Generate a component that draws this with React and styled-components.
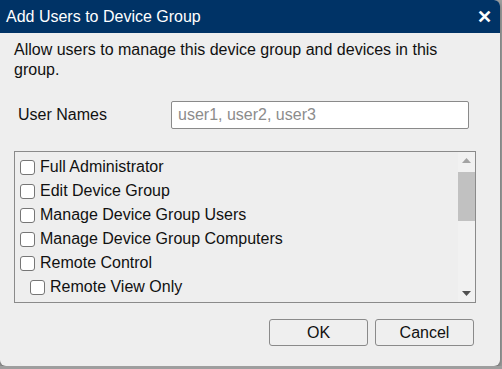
import React from "react";
import styled, { createGlobalStyle } from "styled-components";

const GlobalStyle = createGlobalStyle`
  body {
    margin: 0;
    background: #9e9e9e;
    font-family: Arial, "Liberation Sans", sans-serif;
  }
`;

const Dialog = styled.div`
  width: 500px;
  height: 366px;
  background: #eeeeee;
  border-radius: 0 6px 6px 6px;
  box-shadow: 0 2px 4px rgba(0, 0, 0, 0.35);
  overflow: hidden;
  display: flex;
  flex-direction: column;
  color: #111;
`;

const Header = styled.div`
  height: 33px;
  background: #003366;
  display: flex;
  align-items: center;
  justify-content: space-between;
  padding: 0 8px 0 6px;
  color: #fff;
  font-size: 16px;
`;

const CloseButton = styled.span`
  font-size: 18px;
  font-weight: 900;
  line-height: 1;
  cursor: pointer;
`;

const Body = styled.div`
  flex: 1;
  display: flex;
  flex-direction: column;
  padding: 7px 14px 0 14px;
`;

const Description = styled.p`
  margin: 0;
  font-size: 16px;
  line-height: 20px;
  padding-right: 30px;
`;

const Row = styled.div`
  display: flex;
  align-items: center;
  margin-top: 21px;
  padding-left: 4px;
`;

const Label = styled.label`
  width: 153px;
  font-size: 16px;
`;

const Input = styled.input`
  width: 298px;
  height: 28px;
  box-sizing: border-box;
  border: 1px solid #8a8a8a;
  border-radius: 2px;
  background: #fff;
  padding: 0 6px;
  font-family: inherit;
  font-size: 16px;
  &::placeholder {
    color: #8c8c8c;
  }
`;

const ListBox = styled.div`
  margin-top: 22px;
  width: 462px;
  height: 152px;
  box-sizing: border-box;
  border: 1px solid #8a8a8a;
  display: flex;
`;

const ListItems = styled.div`
  flex: 1;
  overflow: hidden;
  padding-top: 3px;
`;

const Item = styled.label`
  display: flex;
  align-items: center;
  height: 24px;
  padding-left: ${(p) => (p.$indent ? 15 : 5)}px;
  font-size: 16px;
  gap: 5px;
`;

const Box = styled.span`
  width: 13px;
  height: 13px;
  border: 1px solid #767676;
  border-radius: 3px;
  background: #fff;
  flex: none;
`;

const ScrollBar = styled.div`
  width: 17px;
  background: #f1f1f1;
  display: flex;
  flex-direction: column;
  align-items: center;
`;

const Arrow = styled.div`
  height: 17px;
  display: flex;
  align-items: center;
  justify-content: center;
`;

const Thumb = styled.div`
  width: 17px;
  height: 49px;
  background: #c1c1c1;
  margin-top: 3px;
`;

const Spacer = styled.div`
  flex: 1;
`;

const Footer = styled.div`
  display: flex;
  justify-content: flex-end;
  gap: 7px;
  padding-right: 12px;
  margin-top: 16px;
`;

const Button = styled.button`
  width: 99px;
  height: 27px;
  border: 1px solid #8a8a8a;
  border-radius: 3px;
  background: #efefef;
  font-family: inherit;
  font-size: 16px;
  color: #111;
  cursor: pointer;
`;

const permissions = [
  { name: "Full Administrator" },
  { name: "Edit Device Group" },
  { name: "Manage Device Group Users" },
  { name: "Manage Device Group Computers" },
  { name: "Remote Control" },
  { name: "Remote View Only", indent: true },
  { name: "Limited Input Only", indent: true },
];

export default function App() {
  return (
    <>
      <GlobalStyle />
      <Dialog>
        <Header>
          <span>Add Users to Device Group</span>
          <CloseButton>✕</CloseButton>
        </Header>
        <Body>
          <Description>
            Allow users to manage this device group and devices in this group.
          </Description>
          <Row>
            <Label>User Names</Label>
            <Input placeholder="user1, user2, user3" />
          </Row>
          <ListBox>
            <ListItems>
              {permissions.map((p) => (
                <Item key={p.name} $indent={p.indent}>
                  <Box />
                  {p.name}
                </Item>
              ))}
            </ListItems>
            <ScrollBar>
              <Arrow>
                <svg width="9" height="5" viewBox="0 0 9 5">
                  <path d="M0 5 L4.5 0 L9 5 Z" fill="#a3a3a3" />
                </svg>
              </Arrow>
              <Thumb />
              <Spacer />
              <Arrow>
                <svg width="9" height="5" viewBox="0 0 9 5">
                  <path d="M0 0 L4.5 5 L9 0 Z" fill="#505050" />
                </svg>
              </Arrow>
            </ScrollBar>
          </ListBox>
          <Footer>
            <Button>OK</Button>
            <Button>Cancel</Button>
          </Footer>
        </Body>
      </Dialog>
    </>
  );
}
